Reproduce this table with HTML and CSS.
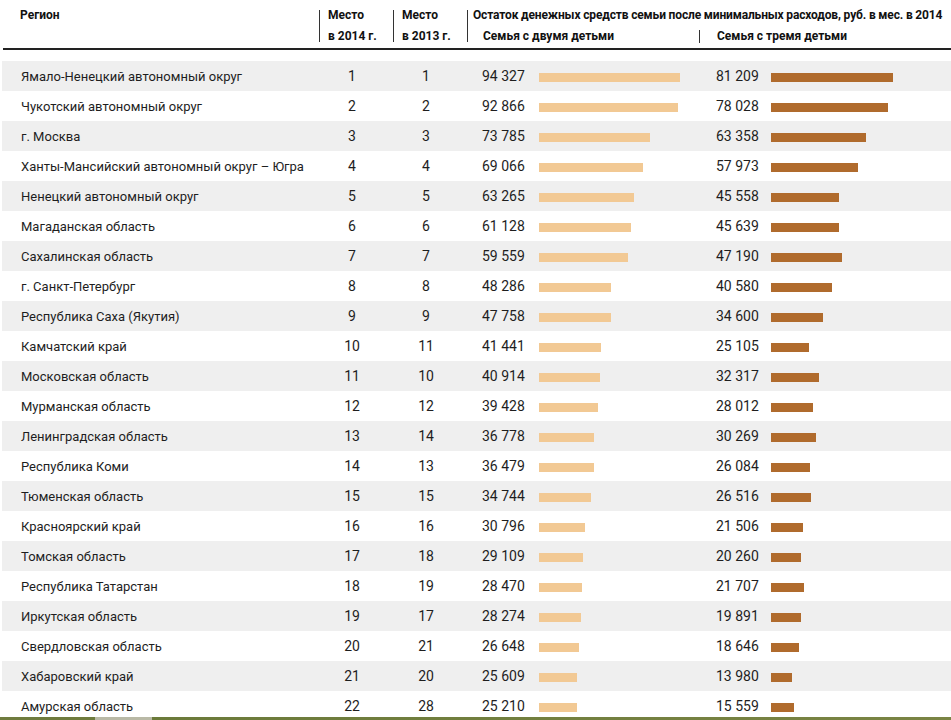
FILE: index.html
```html
<!DOCTYPE html>
<html lang="ru">
<head>
<meta charset="utf-8">
<title>Остаток денежных средств семьи</title>
<link rel="stylesheet" href="styles.css">
</head>
<body>
<div class="page">
  <div class="head">
    <div class="h-region">Регион</div>
    <div class="h-place sep">Место<br>в 2014 г.</div>
    <div class="h-place sep">Место<br>в 2013 г.</div>
    <div class="h-money sep">
      <div class="h-title">Остаток денежных средств семьи после минимальных расходов, руб. в мес. в 2014</div>
      <div class="h-subs">
        <div class="h-sub1">Семья с двумя детьми</div>
        <div class="h-sub2">Семья с тремя детьми</div>
      </div>
    </div>
  </div>
  <div class="rows">
    <div class="row"><div class="c-region">Ямало-Ненецкий автономный округ</div><div class="c-num">1</div><div class="c-num">1</div><div class="c-v1"><span class="val">94 327</span><span class="bar light" style="width:141px"></span></div><div class="c-v2"><span class="val">81 209</span><span class="bar dark" style="width:122px"></span></div></div>
    <div class="row"><div class="c-region">Чукотский автономный округ</div><div class="c-num">2</div><div class="c-num">2</div><div class="c-v1"><span class="val">92 866</span><span class="bar light" style="width:139px"></span></div><div class="c-v2"><span class="val">78 028</span><span class="bar dark" style="width:117px"></span></div></div>
    <div class="row"><div class="c-region">г. Москва</div><div class="c-num">3</div><div class="c-num">3</div><div class="c-v1"><span class="val">73 785</span><span class="bar light" style="width:111px"></span></div><div class="c-v2"><span class="val">63 358</span><span class="bar dark" style="width:95px"></span></div></div>
    <div class="row"><div class="c-region">Ханты-Мансийский автономный округ – Югра</div><div class="c-num">4</div><div class="c-num">4</div><div class="c-v1"><span class="val">69 066</span><span class="bar light" style="width:104px"></span></div><div class="c-v2"><span class="val">57 973</span><span class="bar dark" style="width:87px"></span></div></div>
    <div class="row"><div class="c-region">Ненецкий автономный округ</div><div class="c-num">5</div><div class="c-num">5</div><div class="c-v1"><span class="val">63 265</span><span class="bar light" style="width:95px"></span></div><div class="c-v2"><span class="val">45 558</span><span class="bar dark" style="width:68px"></span></div></div>
    <div class="row"><div class="c-region">Магаданская область</div><div class="c-num">6</div><div class="c-num">6</div><div class="c-v1"><span class="val">61 128</span><span class="bar light" style="width:92px"></span></div><div class="c-v2"><span class="val">45 639</span><span class="bar dark" style="width:68px"></span></div></div>
    <div class="row"><div class="c-region">Сахалинская область</div><div class="c-num">7</div><div class="c-num">7</div><div class="c-v1"><span class="val">59 559</span><span class="bar light" style="width:89px"></span></div><div class="c-v2"><span class="val">47 190</span><span class="bar dark" style="width:71px"></span></div></div>
    <div class="row"><div class="c-region">г. Санкт-Петербург</div><div class="c-num">8</div><div class="c-num">8</div><div class="c-v1"><span class="val">48 286</span><span class="bar light" style="width:72px"></span></div><div class="c-v2"><span class="val">40 580</span><span class="bar dark" style="width:61px"></span></div></div>
    <div class="row"><div class="c-region">Республика Саха (Якутия)</div><div class="c-num">9</div><div class="c-num">9</div><div class="c-v1"><span class="val">47 758</span><span class="bar light" style="width:72px"></span></div><div class="c-v2"><span class="val">34 600</span><span class="bar dark" style="width:52px"></span></div></div>
    <div class="row"><div class="c-region">Камчатский край</div><div class="c-num">10</div><div class="c-num">11</div><div class="c-v1"><span class="val">41 441</span><span class="bar light" style="width:62px"></span></div><div class="c-v2"><span class="val">25 105</span><span class="bar dark" style="width:38px"></span></div></div>
    <div class="row"><div class="c-region">Московская область</div><div class="c-num">11</div><div class="c-num">10</div><div class="c-v1"><span class="val">40 914</span><span class="bar light" style="width:61px"></span></div><div class="c-v2"><span class="val">32 317</span><span class="bar dark" style="width:48px"></span></div></div>
    <div class="row"><div class="c-region">Мурманская область</div><div class="c-num">12</div><div class="c-num">12</div><div class="c-v1"><span class="val">39 428</span><span class="bar light" style="width:59px"></span></div><div class="c-v2"><span class="val">28 012</span><span class="bar dark" style="width:42px"></span></div></div>
    <div class="row"><div class="c-region">Ленинградская область</div><div class="c-num">13</div><div class="c-num">14</div><div class="c-v1"><span class="val">36 778</span><span class="bar light" style="width:55px"></span></div><div class="c-v2"><span class="val">30 269</span><span class="bar dark" style="width:45px"></span></div></div>
    <div class="row"><div class="c-region">Республика Коми</div><div class="c-num">14</div><div class="c-num">13</div><div class="c-v1"><span class="val">36 479</span><span class="bar light" style="width:55px"></span></div><div class="c-v2"><span class="val">26 084</span><span class="bar dark" style="width:39px"></span></div></div>
    <div class="row"><div class="c-region">Тюменская область</div><div class="c-num">15</div><div class="c-num">15</div><div class="c-v1"><span class="val">34 744</span><span class="bar light" style="width:52px"></span></div><div class="c-v2"><span class="val">26 516</span><span class="bar dark" style="width:40px"></span></div></div>
    <div class="row"><div class="c-region">Красноярский край</div><div class="c-num">16</div><div class="c-num">16</div><div class="c-v1"><span class="val">30 796</span><span class="bar light" style="width:46px"></span></div><div class="c-v2"><span class="val">21 506</span><span class="bar dark" style="width:32px"></span></div></div>
    <div class="row"><div class="c-region">Томская область</div><div class="c-num">17</div><div class="c-num">18</div><div class="c-v1"><span class="val">29 109</span><span class="bar light" style="width:44px"></span></div><div class="c-v2"><span class="val">20 260</span><span class="bar dark" style="width:30px"></span></div></div>
    <div class="row"><div class="c-region">Республика Татарстан</div><div class="c-num">18</div><div class="c-num">19</div><div class="c-v1"><span class="val">28 470</span><span class="bar light" style="width:43px"></span></div><div class="c-v2"><span class="val">21 707</span><span class="bar dark" style="width:33px"></span></div></div>
    <div class="row"><div class="c-region">Иркутская область</div><div class="c-num">19</div><div class="c-num">17</div><div class="c-v1"><span class="val">28 274</span><span class="bar light" style="width:42px"></span></div><div class="c-v2"><span class="val">19 891</span><span class="bar dark" style="width:30px"></span></div></div>
    <div class="row"><div class="c-region">Свердловская область</div><div class="c-num">20</div><div class="c-num">21</div><div class="c-v1"><span class="val">26 648</span><span class="bar light" style="width:40px"></span></div><div class="c-v2"><span class="val">18 646</span><span class="bar dark" style="width:28px"></span></div></div>
    <div class="row"><div class="c-region">Хабаровский край</div><div class="c-num">21</div><div class="c-num">20</div><div class="c-v1"><span class="val">25 609</span><span class="bar light" style="width:38px"></span></div><div class="c-v2"><span class="val">13 980</span><span class="bar dark" style="width:21px"></span></div></div>
    <div class="row"><div class="c-region">Амурская область</div><div class="c-num">22</div><div class="c-num">28</div><div class="c-v1"><span class="val">25 210</span><span class="bar light" style="width:38px"></span></div><div class="c-v2"><span class="val">15 559</span><span class="bar dark" style="width:23px"></span></div></div>
  </div>
</div>
<div class="edge"></div>
</body>
</html>
```

FILE: styles.css
```css
html, body {
  margin: 0;
  padding: 0;
  background: #ffffff;
}
body {
  font-family: Roboto, "Liberation Sans", sans-serif;
  color: #1e1e1e;
  overflow: hidden;
}
.page {
  padding-left: 2px;
}
.head {
  display: grid;
  grid-template-columns: 316px 74px 74px 485px;
  padding-top: 5px;
  height: 43px;
  margin-left: 1px;
  border-bottom: 2px solid #222;
  font-weight: 700;
  font-size: 12px;
  line-height: 21px;
  color: #111;
}
.h-region {
  padding-left: 17px;
}
.sep {
  background: linear-gradient(#333, #333) left 5px / 1px 32px no-repeat;
}
.h-place {
  padding-left: 9px;
}
.h-money {
  padding-left: 6px;
  white-space: nowrap;
}
.h-title {
  letter-spacing: -0.15px;
}
.h-subs {
  display: grid;
  grid-template-columns: 226px 1fr;
}
.h-sub1 {
  padding-left: 10px;
}
.h-sub2 {
  padding-left: 18px;
  background: linear-gradient(#333, #333) left 4px / 1px 13px no-repeat;
}
.rows {
  margin-top: 11px;
}
.row {
  display: grid;
  grid-template-columns: 316px 74px 74px 232px 253px;
  height: 30px;
  align-items: center;
  font-size: 14px;
}
.row:nth-child(odd) {
  background: #efefef;
}
.c-region {
  padding-left: 19px;
  white-space: nowrap;
  font-size: 13px;
}
.c-num {
  text-align: center;
  padding-right: 6px;
}
.c-v1, .c-v2 {
  display: flex;
  align-items: center;
  height: 30px;
}
.c-v1 {
  padding-left: 16px;
}
.c-v2 {
  padding-left: 18px;
}
.val {
  width: 57px;
  flex: none;
}
.c-v2 .val {
  width: 55px;
}
.bar {
  display: block;
  height: 9px;
  margin-top: 3px;
  flex: none;
}
.light {
  background: #f2c994;
}
.dark {
  background: #b06b2d;
}
.edge {
  position: fixed;
  left: 0;
  right: 0;
  bottom: 0;
  height: 3px;
  background: linear-gradient(90deg, #6f7b3e 0, #6f7b3e 95px, #b9b9a6 95px, #b9b9a6 152px, #6b7a3a 152px, #7a8444 100%);
}
```
